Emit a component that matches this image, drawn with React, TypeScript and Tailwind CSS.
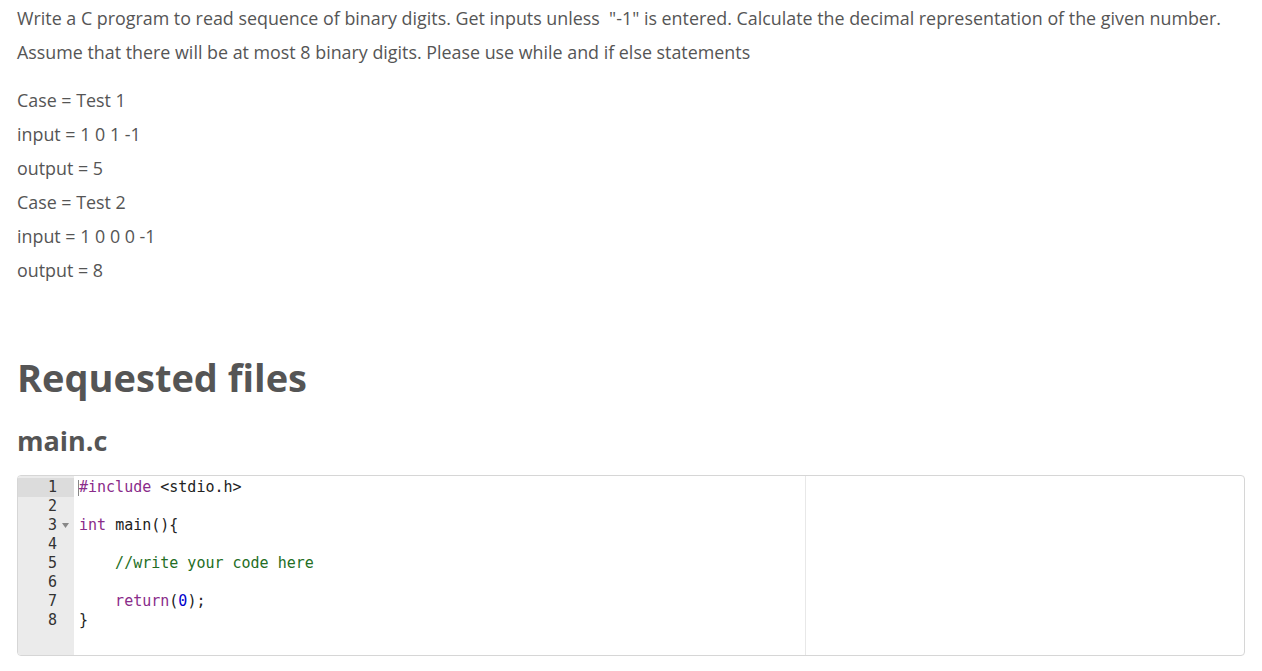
export default function App() {
  const lines = [
    <span><span className="text-[#8a2c8a]">#include</span> <span className="text-[#222]">&lt;stdio.h&gt;</span></span>,
    <span></span>,
    <span><span className="text-[#8a2c8a]">int</span> <span className="text-[#222]">main(){"{"}</span></span>,
    <span></span>,
    <span className="whitespace-pre text-[#236e24]">{"    //write your code here"}</span>,
    <span></span>,
    <span className="whitespace-pre"><span className="text-[#8a2c8a]">{"    return"}</span><span className="text-[#222]">(</span><span className="text-[#0000cd]">0</span><span className="text-[#222]">);</span></span>,
    <span className="text-[#222]">{"}"}</span>,
  ];

  return (
    <div className="min-h-screen bg-white px-[17px] pt-[1px] text-[#555] font-['Open_Sans',sans-serif]">
      <p className="text-[17.88px] leading-[34px] whitespace-pre-wrap">
        Write a C program to read sequence of binary digits. Get inputs unless  "-1" is entered. Calculate the decimal representation of the given number. Assume that there will be at most 8 binary digits. Please use while and if else statements
      </p>
      <div className="mt-[14px] text-[17.88px] leading-[34px]">
        <p>Case = Test 1</p>
        <p>input = 1 0 1 -1</p>
        <p>output = 5</p>
        <p>Case = Test 2</p>
        <p>input = 1 0 0 0 -1</p>
        <p>output = 8</p>
      </div>

      <h2 className="mt-[66px] text-[38px] leading-[48px] font-bold text-[#555]">Requested files</h2>
      <h3 className="mt-[22px] text-[27px] leading-[36px] font-bold text-[#555]">main.c</h3>

      <div className="mt-[16px] h-[181px] rounded-[4px] border border-[#d6d6d6] flex overflow-hidden font-['DejaVu_Sans_Mono',monospace] text-[15px]">
        <div className="w-[56px] bg-[#ebebeb] pt-[2px]">
          {lines.map((_, i) => (
            <div key={i} className={`h-[19px] leading-[19px] flex items-center ${i === 0 ? "bg-[#dcdcdc]" : ""}`}>
              <span className="w-[39px] text-right text-[#333]">{i + 1}</span>
              <span className="w-[17px] flex justify-center">
                {i === 2 && (
                  <svg width="7" height="5" viewBox="0 0 7 5"><path d="M0 0h7L3.5 5z" fill="#888" /></svg>
                )}
              </span>
            </div>
          ))}
        </div>
        <div className="flex-1 relative pt-[2px] pl-[5px]">
          <div className="absolute left-[731px] top-0 bottom-0 w-px bg-[#e8e8e8]" />
          {lines.map((l, i) => (
            <div key={i} className="h-[19px] leading-[19px] whitespace-pre">
              {i === 0 && <span className="inline-block w-px h-[16px] bg-[#888] align-middle -ml-px" />}
              {l}
            </div>
          ))}
        </div>
      </div>
    </div>
  );
}
